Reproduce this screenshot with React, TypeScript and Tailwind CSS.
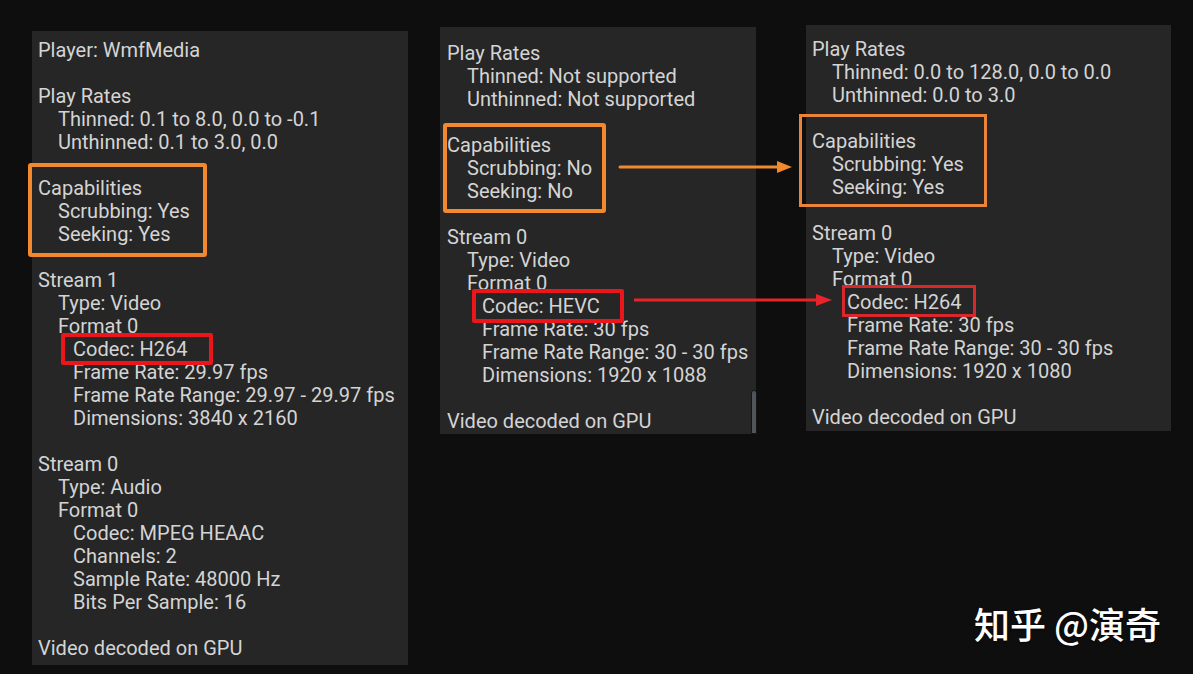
import React from 'react';

type Line = [number, string] | null;

const panelOne: Line[] = [
  [0, 'Player: WmfMedia'],
  null,
  [0, 'Play Rates'],
  [1, 'Thinned: 0.1 to 8.0, 0.0 to -0.1'],
  [1, 'Unthinned: 0.1 to 3.0, 0.0'],
  null,
  [0, 'Capabilities'],
  [1, 'Scrubbing: Yes'],
  [1, 'Seeking: Yes'],
  null,
  [0, 'Stream 1'],
  [1, 'Type: Video'],
  [1, 'Format 0'],
  [2, 'Codec: H264'],
  [2, 'Frame Rate: 29.97 fps'],
  [2, 'Frame Rate Range: 29.97 - 29.97 fps'],
  [2, 'Dimensions: 3840 x 2160'],
  null,
  [0, 'Stream 0'],
  [1, 'Type: Audio'],
  [1, 'Format 0'],
  [2, 'Codec: MPEG HEAAC'],
  [2, 'Channels: 2'],
  [2, 'Sample Rate: 48000 Hz'],
  [2, 'Bits Per Sample: 16'],
  null,
  [0, 'Video decoded on GPU'],
];

const panelTwo: Line[] = [
  [0, 'Play Rates'],
  [1, 'Thinned: Not supported'],
  [1, 'Unthinned: Not supported'],
  null,
  [0, 'Capabilities'],
  [1, 'Scrubbing: No'],
  [1, 'Seeking: No'],
  null,
  [0, 'Stream 0'],
  [1, 'Type: Video'],
  [1, 'Format 0'],
  [2, 'Codec: HEVC'],
  [2, 'Frame Rate: 30 fps'],
  [2, 'Frame Rate Range: 30 - 30 fps'],
  [2, 'Dimensions: 1920 x 1088'],
  null,
  [0, 'Video decoded on GPU'],
];

const panelThree: Line[] = [
  [0, 'Play Rates'],
  [1, 'Thinned: 0.0 to 128.0, 0.0 to 0.0'],
  [1, 'Unthinned: 0.0 to 3.0'],
  null,
  [0, 'Capabilities'],
  [1, 'Scrubbing: Yes'],
  [1, 'Seeking: Yes'],
  null,
  [0, 'Stream 0'],
  [1, 'Type: Video'],
  [1, 'Format 0'],
  [2, 'Codec: H264'],
  [2, 'Frame Rate: 30 fps'],
  [2, 'Frame Rate Range: 30 - 30 fps'],
  [2, 'Dimensions: 1920 x 1080'],
  null,
  [0, 'Video decoded on GPU'],
];

const indentClass = ['pl-0', 'pl-[20px]', 'pl-[35px]'];

function StatsText({ lines }: { lines: Line[] }) {
  return (
    <div className="flex flex-col">
      {lines.map((line, i) =>
        line ? (
          <div key={i} className={`h-[23px] leading-[23px] whitespace-nowrap ${indentClass[line[0]]}`}>
            {line[1]}
          </div>
        ) : (
          <div key={i} className="h-[23px]" />
        )
      )}
    </div>
  );
}

export default function App() {
  return (
    <div
      className="relative w-[1193px] h-[674px] overflow-hidden bg-[#0e0e0e] text-[20px] text-[#d4d4d4]"
      style={{ fontFamily: 'Roboto, "Noto Sans", sans-serif' }}
    >
      <div className="flex items-start pl-[32px]">
        {/* Player 1 */}
        <div className="mt-[31px] w-[376px] h-[634px] bg-[#262626] pt-[8px] pl-[6px]">
          <StatsText lines={panelOne} />
        </div>

        {/* Player 2 */}
        <div className="relative mt-[27px] ml-[32px] w-[316px] h-[407px] bg-[#262626] pt-[15px] pl-[7px]">
          <StatsText lines={panelTwo} />
          <div className="absolute right-[-1px] bottom-0 w-[6px] h-[44px] rounded-t-[3px] bg-[#50555b] border border-[#151515]" />
        </div>

        {/* Player 3 */}
        <div className="mt-[25px] ml-[50px] w-[365px] h-[406px] bg-[#262626] pt-[13px] pl-[6px]">
          <StatsText lines={panelThree} />
        </div>
      </div>

      {/* annotations */}
      <div className="absolute left-[28px] top-[163px] w-[179px] h-[94px] border-[4px] border-[#f3892d] rounded-[3px]" />
      <div className="absolute left-[443px] top-[123px] w-[163px] h-[90px] border-[4px] border-[#f3892d] rounded-[3px]" />
      <div className="absolute left-[799px] top-[114px] w-[188px] h-[93px] border-[3px] border-[#e9843a]" />

      <div className="absolute left-[61px] top-[333px] w-[152px] h-[32px] border-[4px] border-[#ea161c] rounded-[2px]" />
      <div className="absolute left-[472px] top-[289px] w-[152px] h-[34px] border-[4px] border-[#ea161c] rounded-[2px]" />
      <div className="absolute left-[842px] top-[285px] w-[134px] h-[32px] border-[3px] border-[#d9282c]" />

      <svg className="absolute left-0 top-0" width="1193" height="674" viewBox="0 0 1193 674">
        <line x1="620" y1="167" x2="780" y2="167" stroke="#f3892d" strokeWidth="3" strokeLinecap="round" />
        <polygon points="777,161 792,167 777,173" fill="#f3892d" />
        <line x1="634" y1="300" x2="818" y2="300" stroke="#e8232a" strokeWidth="3" />
        <polygon points="816,294 832,300 816,306" fill="#e8232a" />
      </svg>

      <div
        className="absolute left-[974px] top-[600px] text-[36px] font-medium leading-[46px] text-white whitespace-nowrap"
        style={{ fontFamily: '"Noto Sans CJK SC", "Noto Sans", sans-serif', textShadow: '0 1px 2px rgba(0,0,0,0.6)' }}
      >
        知乎 @演奇
      </div>
    </div>
  );
}
